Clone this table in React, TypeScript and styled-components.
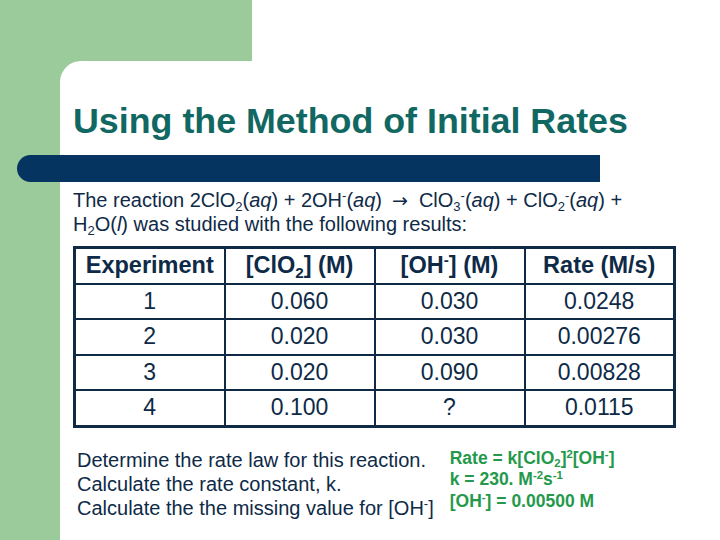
import React from "react";
import styled, { createGlobalStyle } from "styled-components";

const GlobalStyle = createGlobalStyle`
  html, body {
    margin: 0;
    padding: 0;
    background: #ffffff;
  }
  body {
    font-family: "Liberation Sans", Arial, sans-serif;
  }
`;

const Page = styled.div`
  width: 720px;
  height: 540px;
  display: flex;
  flex-direction: column;
  overflow: hidden;
  background: #ffffff;
`;

const TopBand = styled.div`
  height: 61px;
  display: flex;
`;

const GreenTab = styled.div`
  width: 252px;
  background: #9ccb9b;
`;

const Body = styled.div`
  flex: 1;
  display: flex;
  background: #9ccb9b;
  padding-left: 60px;
`;

const Card = styled.div`
  flex: 1;
  background: #ffffff;
  border-top-left-radius: 21px;
  padding: 40px 0 0 13px;
  display: flex;
  flex-direction: column;
`;

const Title = styled.h1`
  margin: 0;
  font-size: 35.8px;
  line-height: 40px;
  font-weight: bold;
  color: #116862;
`;

const Bar = styled.div`
  margin: 14px 0 0 -56px;
  width: 583px;
  height: 27px;
  background: #04345f;
  border-radius: 14px 0 0 14px;
`;

const Lead = styled.p`
  margin: 6px 0 0;
  font-size: 20px;
  line-height: 24px;
  color: #0e2a47;
`;

const Arrow = styled.span`
  font-family: "DejaVu Sans", sans-serif;
  font-size: 19px;
  line-height: 0;
  margin: 0 11px 0 10px;
`;

const Sub = styled.sub`
  font-size: 0.65em;
  line-height: 0;
  vertical-align: -0.3em;
`;

const Sup = styled.sup`
  font-size: 0.65em;
  line-height: 0;
  vertical-align: 0.55em;
`;

const Table = styled.table`
  margin-top: 10px;
  width: 603px;
  border-collapse: collapse;
  border: 3px solid #0e2a47;
  color: #0e2a47;
`;

const Cell = styled.td<{ $head?: boolean }>`
  border: 2px solid #0e2a47;
  height: 33.5px;
  padding: 0;
  width: 25%;
  text-align: center;
  font-size: ${(p) => (p.$head ? "23.5px" : "23px")};
  font-weight: ${(p) => (p.$head ? "bold" : "normal")};
  line-height: 33px;
`;

const Footer = styled.div`
  margin-top: 20px;
  display: flex;
  align-items: flex-start;
  gap: 16px;
  padding-left: 4px;
`;

const Questions = styled.div`
  font-size: 20px;
  line-height: 24px;
  color: #0e2a47;
`;

const Answers = styled.div`
  margin-top: 0;
  font-size: 17.5px;
  line-height: 21.5px;
  font-weight: bold;
  color: #24994b;
`;

const rows = [
  ["1", "0.060", "0.030", "0.0248"],
  ["2", "0.020", "0.030", "0.00276"],
  ["3", "0.020", "0.090", "0.00828"],
  ["4", "0.100", "?", "0.0115"],
];

const App = () => {
  return (
    <Page>
      <GlobalStyle />
      <TopBand>
        <GreenTab />
      </TopBand>
      <Body>
        <Card>
          <Title>Using the Method of Initial Rates</Title>
          <Bar />
          <Lead>
            The reaction 2ClO<Sub>2</Sub>(<i>aq</i>) + 2OH<Sup>-</Sup>(<i>aq</i>)
            <Arrow>&rarr;</Arrow>ClO<Sub>3</Sub>
            <Sup>-</Sup>(<i>aq</i>) + ClO<Sub>2</Sub>
            <Sup>-</Sup>(<i>aq</i>) +
            <br />
            H<Sub>2</Sub>O(<i>l</i>) was studied with the following results:
          </Lead>
          <Table>
            <tbody>
              <tr>
                <Cell $head>Experiment</Cell>
                <Cell $head>
                  [ClO<Sub>2</Sub>] (M)
                </Cell>
                <Cell $head>
                  [OH<Sup>-</Sup>] (M)
                </Cell>
                <Cell $head>Rate (M/s)</Cell>
              </tr>
              {rows.map((r, i) => (
                <tr key={i}>
                  {r.map((v, j) => (
                    <Cell key={j}>{v}</Cell>
                  ))}
                </tr>
              ))}
            </tbody>
          </Table>
          <Footer>
            <Questions>
              Determine the rate law for this reaction.
              <br />
              Calculate the rate constant, k.
              <br />
              Calculate the the missing value for [OH<Sup>-</Sup>]
            </Questions>
            <Answers>
              Rate = k[ClO<Sub>2</Sub>]<Sup>2</Sup>[OH<Sup>-</Sup>]
              <br />
              k = 230. M<Sup>-2</Sup>s<Sup>-1</Sup>
              <br />
              [OH<Sup>-</Sup>] = 0.00500 M
            </Answers>
          </Footer>
        </Card>
      </Body>
    </Page>
  );
};

export default App;
